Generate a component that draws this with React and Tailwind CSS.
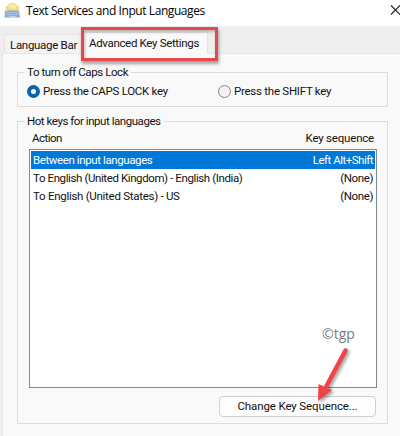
import { clsx } from 'clsx';

const hotKeys = [
  { action: 'Between input languages', keys: 'Left Alt+Shift', actionClass: 'tracking-[-0.4px]', keysClass: 'tracking-[-0.5px]', selected: true },
  { action: 'To English (United Kingdom) - English (India)', keys: '(None)', actionClass: 'tracking-[-0.4px]', keysClass: 'tracking-[-0.4px]' },
  { action: 'To English (United States) - US', keys: '(None)', actionClass: 'tracking-[-0.28px]', keysClass: 'tracking-[-0.4px]' },
];

function KeyboardIcon() {
  return (
    <svg width="17" height="17" viewBox="0 0 17 17" className="shrink-0">
      <path d="M4.5 9 C0.5 8 1 3.5 4 3.5 C4.5 0 12 0 12.5 3 C16 3 17 8 12.5 9 Z" fill="#f6d889" />
      <ellipse cx="8.5" cy="4.3" rx="4" ry="2.5" fill="#fbe7a6" />
      <path d="M1 8.5 H15 L16 15.5 H0.5 Z" fill="#86abd5" />
      <path d="M2 10.5 H15 M1.5 12.5 H15" stroke="#b9cfea" strokeWidth="1" strokeDasharray="1.5 1" />
      <path d="M5 14.5 H12" stroke="#b9cfea" />
    </svg>
  );
}

function TitleBar() {
  return (
    <div className="h-[26px] shrink-0 bg-white flex items-center pl-1 relative">
      <div className="self-start pt-[2px]"><KeyboardIcon /></div>
      <span className="ml-[5px] -mt-[4px] font-['Open_Sans',sans-serif] text-[12px] tracking-[-0.42px] text-black">
        Text Services and Input Languages
      </span>
      <svg width="10" height="11" viewBox="0 0 10 11" className="absolute right-0 top-[5px]">
        <path d="M1 0.5 L10 9.5 M10 0.5 L1 9.5" stroke="#222" strokeWidth="1.1" />
      </svg>
    </div>
  );
}

function Tabs() {
  return (
    <div className="h-[27px] shrink-0 flex items-end pl-1 relative">
      <div className="w-[78px] h-[19px] bg-[#f3f3f3] border border-b-0 border-[#e5e5e5] pl-[5px] leading-[20px] tracking-[-0.3px]">
        Language Bar
      </div>
      <div className="w-[126px] h-[22px] -mb-px relative bg-[#f9f9f9] border border-b-0 border-[#e2e2e2] pl-[6px] leading-[20px] z-10 tracking-[-0.33px]">
        Advanced Key Settings
      </div>
      {/* highlight around the active tab */}
      <div className="absolute z-20 left-[81px] top-[1px] w-[137px] h-[34px] border-[3px] border-[#e8474c] shadow-[1px_3px_3px_rgba(0,0,0,0.35),inset_1px_2px_3px_rgba(0,0,0,0.25)]" />
    </div>
  );
}

function Group({ title, className, titleClass, children }) {
  return (
    <div className={clsx('relative border border-[#dcdcdc]', className)}>
      <span className={clsx('absolute left-[6px] -top-[9px] h-4 leading-4 px-[3px] bg-[#f9f9f9]', titleClass)}>{title}</span>
      {children}
    </div>
  );
}

function Radio({ label, checked, className }) {
  return (
    <div className={clsx('flex items-center', className)}>
      <span
        className={clsx(
          'size-[13px] rounded-full shrink-0',
          checked ? 'bg-white border-4 border-[#0a63ad]' : 'bg-[#f3f3f3] border border-[#868686]'
        )}
      />
      <span className="ml-[3px] pt-px">{label}</span>
    </div>
  );
}

function Arrow() {
  return (
    <svg width="40" height="64" viewBox="0 0 40 64" className="absolute left-[312px] top-[343px] z-20 drop-shadow-[2px_2px_1.5px_rgba(0,0,0,0.35)]">
      <path d="M33.5 7.5 L14.5 43" stroke="#f04449" strokeWidth="4.5" strokeLinecap="round" />
      <path d="M6.5 41 L20 47 L6 58 Z" fill="#f04449" />
    </svg>
  );
}

export default function App() {
  return (
    <div className="relative w-[400px] h-[436px] overflow-hidden bg-[#eeeeee] flex flex-col font-[Roboto,sans-serif] text-[11.5px] text-[#111] whitespace-nowrap">
      <TitleBar />
      <Tabs />
      <div className="flex-1 ml-[2px] bg-[#f9f9f9] border-t border-l border-[#e5e5e5] pl-[14px] pt-[18px]">
        <Group title="To turn off Caps Lock" className="w-[371px] h-[35px] flex" titleClass="tracking-[-0.42px]">
          <Radio label="Press the CAPS LOCK key" checked className="ml-[9px] mt-[4px] w-[191px] tracking-[-0.28px]" />
          <Radio label="Press the SHIFT key" className="mt-[4px] tracking-[-0.26px]" />
        </Group>

        <Group title="Hot keys for input languages" className="mt-[14px] w-[371px] h-[303px] pt-[7px] pl-[11px]" titleClass="tracking-[-0.45px]">
          <div className="w-[348px] h-[20px] pl-[3px] pr-[3px] flex justify-between leading-[18px]">
            <span className="tracking-[-0.55px]">Action</span>
            <span className="tracking-[-0.2px]">Key sequence</span>
          </div>
          <div className="w-[348px] h-[239px] bg-white border border-[#828790] p-px">
            {hotKeys.map((row) => (
              <div
                key={row.action}
                className={clsx('h-[18px] leading-[18px] px-[2px] flex justify-between', row.selected && 'bg-[#0078d7] text-white')}
              >
                <span className={row.actionClass}>{row.action}</span>
                <span className={row.keysClass}>{row.keys}</span>
              </div>
            ))}
          </div>
          <button className="block ml-[190px] mt-[8px] w-[157px] h-[21px] bg-[#fdfdfd] border border-[#d0d0d0] rounded-[4px] leading-[19px] tracking-[-0.12px]">
            Change Key Sequence...
          </button>
        </Group>
      </div>
      <span className="absolute left-[322px] top-[324px] font-['Open_Sans',sans-serif] text-[14px] leading-5 text-[#7c7c7c]">©tgp</span>
      <Arrow />
    </div>
  );
}
